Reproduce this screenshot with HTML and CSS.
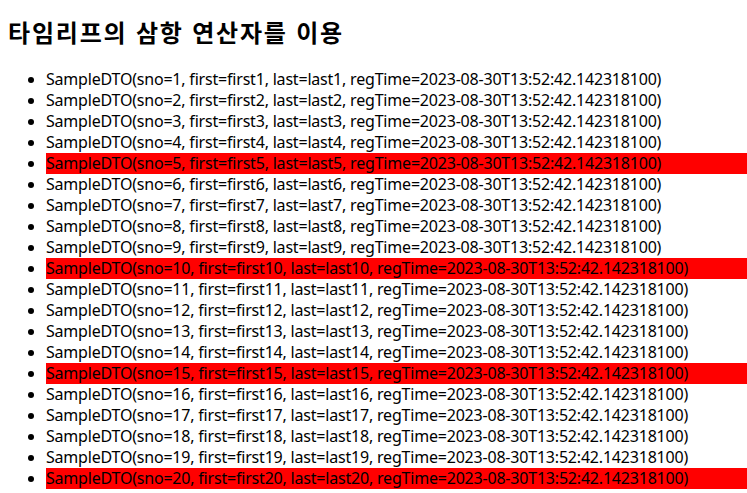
FILE: index.html
```html
<!DOCTYPE html>
<html lang="ko">
<head>
    <meta charset="UTF-8">
    <meta name="viewport" content="width=device-width, initial-scale=1.0">
    <title>Thymeleaf</title>
    <link rel="stylesheet" href="styles.css">
</head>
<body>
    <h1>타임리프의 삼항 연산자를 이용</h1>
    <ul class="dto-list">
        <li>SampleDTO(sno=1, first=first1, last=last1, regTime=2023-08-30T13:52:42.142318100)</li>
        <li>SampleDTO(sno=2, first=first2, last=last2, regTime=2023-08-30T13:52:42.142318100)</li>
        <li>SampleDTO(sno=3, first=first3, last=last3, regTime=2023-08-30T13:52:42.142318100)</li>
        <li>SampleDTO(sno=4, first=first4, last=last4, regTime=2023-08-30T13:52:42.142318100)</li>
        <li class="target">SampleDTO(sno=5, first=first5, last=last5, regTime=2023-08-30T13:52:42.142318100)</li>
        <li>SampleDTO(sno=6, first=first6, last=last6, regTime=2023-08-30T13:52:42.142318100)</li>
        <li>SampleDTO(sno=7, first=first7, last=last7, regTime=2023-08-30T13:52:42.142318100)</li>
        <li>SampleDTO(sno=8, first=first8, last=last8, regTime=2023-08-30T13:52:42.142318100)</li>
        <li>SampleDTO(sno=9, first=first9, last=last9, regTime=2023-08-30T13:52:42.142318100)</li>
        <li class="target">SampleDTO(sno=10, first=first10, last=last10, regTime=2023-08-30T13:52:42.142318100)</li>
        <li>SampleDTO(sno=11, first=first11, last=last11, regTime=2023-08-30T13:52:42.142318100)</li>
        <li>SampleDTO(sno=12, first=first12, last=last12, regTime=2023-08-30T13:52:42.142318100)</li>
        <li>SampleDTO(sno=13, first=first13, last=last13, regTime=2023-08-30T13:52:42.142318100)</li>
        <li>SampleDTO(sno=14, first=first14, last=last14, regTime=2023-08-30T13:52:42.142318100)</li>
        <li class="target">SampleDTO(sno=15, first=first15, last=last15, regTime=2023-08-30T13:52:42.142318100)</li>
        <li>SampleDTO(sno=16, first=first16, last=last16, regTime=2023-08-30T13:52:42.142318100)</li>
        <li>SampleDTO(sno=17, first=first17, last=last17, regTime=2023-08-30T13:52:42.142318100)</li>
        <li>SampleDTO(sno=18, first=first18, last=last18, regTime=2023-08-30T13:52:42.142318100)</li>
        <li>SampleDTO(sno=19, first=first19, last=last19, regTime=2023-08-30T13:52:42.142318100)</li>
        <li class="target">SampleDTO(sno=20, first=first20, last=last20, regTime=2023-08-30T13:52:42.142318100)</li>
    </ul>
</body>
</html>
```

FILE: styles.css
```css
body {
    font-family: "Noto Sans", "Noto Sans CJK KR", sans-serif;
    margin: 0 0 0 8px;
    color: #000;
    background: #fff;
}

h1 {
    font-family: "Noto Sans CJK KR", sans-serif;
    font-size: 24px;
    font-weight: bold;
    letter-spacing: 1.8px;
    line-height: 32px;
    margin: 16px 0 21px;
}

.dto-list {
    margin: 0;
    padding-left: 38px;
}

.dto-list li {
    font-size: 16px;
    line-height: 21px;
    letter-spacing: -0.2px;
    white-space: nowrap;
}

.dto-list .target {
    background-color: red;
}
```
